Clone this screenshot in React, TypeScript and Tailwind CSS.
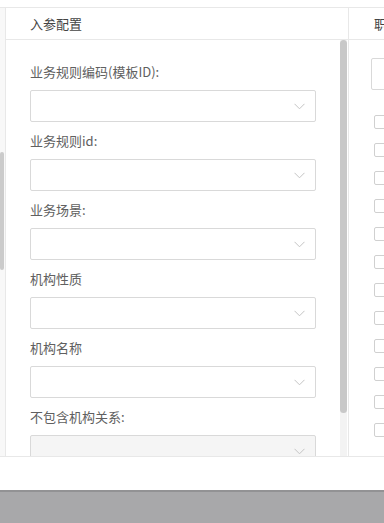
import React from 'react';

const fields = [
  { label: '业务规则编码(模板ID):', disabled: false },
  { label: '业务规则id:', disabled: false },
  { label: '业务场景:', disabled: false },
  { label: '机构性质', disabled: false },
  { label: '机构名称', disabled: false },
  { label: '不包含机构关系:', disabled: true },
];

const Chevron: React.FC = () => (
  <svg width="11" height="7" viewBox="0 0 11 7" fill="none" className="shrink-0">
    <path d="M0.5 0.8 L5.5 5.8 L10.5 0.8" stroke="#c4c4c4" strokeWidth="1" />
  </svg>
);

const SelectField: React.FC<{ label: string; disabled: boolean }> = ({ label, disabled }) => (
  <div className="mb-[9px]">
    <div className="h-[20px] leading-[20px] text-[13px] text-[#606060] mb-[8px] whitespace-nowrap">{label}</div>
    <div
      className={`w-[286px] h-[32px] border border-[#d9d9d9] rounded-[2px] flex items-center justify-end pr-[10px] ${disabled ? 'bg-[#f5f5f5]' : 'bg-white'}`}
    >
      <Chevron />
    </div>
  </div>
);

export default function App() {
  return (
    <div
      className="w-[384px] h-[523px] bg-white flex flex-col overflow-hidden"
      style={{ fontFamily: '"Noto Sans CJK SC", "Noto Sans", sans-serif' }}
    >
      <div className="h-[7px] shrink-0" />
      <div className="flex h-[450px] shrink-0 border-t border-b border-[#e8e8e8]">
        {/* outer scroll strip */}
        <div className="w-[6px] shrink-0 bg-[#f8f8f8] border-r border-[#e8e8e8] pt-[144px]">
          <div className="w-[4px] h-[118px] rounded-[2px] bg-[#cbcbcb]" />
        </div>

        {/* main panel */}
        <div className="w-[342px] shrink-0 flex flex-col">
          <div className="h-[32px] shrink-0 border-b border-[#e8e8e8] flex items-center pl-[24px] text-[13px] text-[#444]">
            入参配置
          </div>
          <div className="flex flex-1 overflow-hidden">
            <div className="flex-1 pl-[24px] pt-[22px] overflow-hidden">
              {fields.map((f) => (
                <SelectField key={f.label} label={f.label} disabled={f.disabled} />
              ))}
            </div>
            <div className="w-[7px] mr-[1px] shrink-0 bg-[#f3f3f3] flex flex-col">
              <div className="h-[373px] rounded-[4px] bg-[#c8c8c8]" />
            </div>
          </div>
        </div>

        {/* right panel */}
        <div className="flex-1 border-l border-[#e8e8e8] flex flex-col overflow-hidden">
          <div className="h-[32px] shrink-0 border-b border-[#e8e8e8] flex items-center pl-[25px] text-[13px] text-[#444] whitespace-nowrap">
            职级
          </div>
          <div className="pl-[22px] pt-[18px]">
            <div className="w-[40px] h-[32px] border border-[#d9d9d9] rounded-[2px]" />
            <div className="pl-[3px] pt-[25px] flex flex-col gap-[14px]">
              {Array.from({ length: 12 }).map((_, i) => (
                <div key={i} className="w-[14px] h-[14px] border border-[#d0d0d0] rounded-[2px] bg-white" />
              ))}
            </div>
          </div>
        </div>
      </div>
      <div className="h-[33px] shrink-0 bg-white" />
      <div className="flex-1 border-t-[2px] border-[#929294] bg-[#a8a8aa]" />
    </div>
  );
}
